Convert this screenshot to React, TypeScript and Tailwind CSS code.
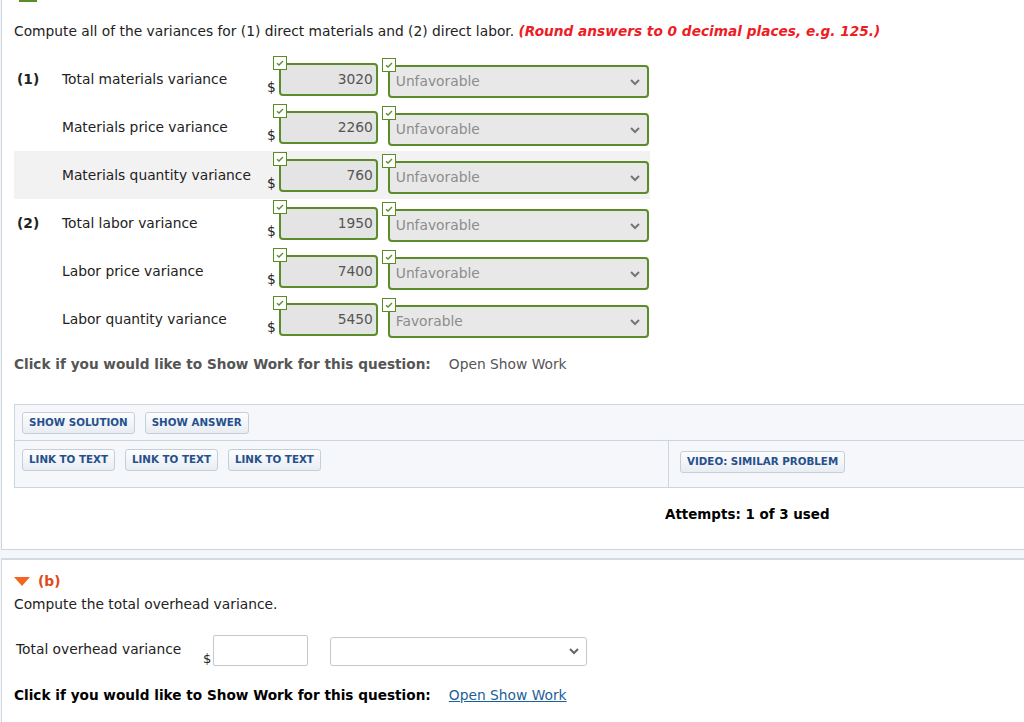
import React from "react";

const font = { fontFamily: '"DejaVu Sans", Verdana, sans-serif' };

function Check() {
  return (
    <div className="absolute -left-[8px] -top-[9px] w-[14px] h-[14px] border border-[#5b8c2a] bg-white flex items-center justify-center z-10">
      <svg width="10" height="8" viewBox="0 0 10 8">
        <path d="M2 4.2 L4 6 L8 2" fill="none" stroke="#5b8c2a" strokeWidth="1.3" />
      </svg>
    </div>
  );
}

function Chevron({ color = "#777" }: { color?: string }) {
  return (
    <svg width="12" height="8" viewBox="0 0 12 8">
      <path d="M2 2 L6 6 L10 2" fill="none" stroke={color} strokeWidth="2" />
    </svg>
  );
}

type Row = { num?: string; label: string; value: string; choice: string; shaded?: boolean };

const rows: Row[] = [
  { num: "(1)", label: "Total materials variance", value: "3020", choice: "Unfavorable" },
  { label: "Materials price variance", value: "2260", choice: "Unfavorable" },
  { label: "Materials quantity variance", value: "760", choice: "Unfavorable", shaded: true },
  { num: "(2)", label: "Total labor variance", value: "1950", choice: "Unfavorable" },
  { label: "Labor price variance", value: "7400", choice: "Unfavorable" },
  { label: "Labor quantity variance", value: "5450", choice: "Favorable" },
];

function Btn({ children }: { children: React.ReactNode }) {
  return (
    <div className="h-[22px] px-[6px] flex items-center rounded-[3px] border border-[#c5cfdc] bg-gradient-to-b from-[#fdfdfe] to-[#e8edf3] text-[10.3px] font-bold text-[#25508c] whitespace-nowrap">
      {children}
    </div>
  );
}

export default function App() {
  return (
    <div className="relative w-[1024px] h-[722px] overflow-hidden bg-[#f4f6f9] text-[13.8px] text-[#222]" style={font}>
      {/* Panel 1 */}
      <div className="relative ml-px h-[550px] bg-white border-l border-b border-[#ccd4df] pl-[12px]">
        <div className="absolute left-[17px] top-0 w-[18px] h-[2px] bg-[#5b8c2a]" />
        <div className="pt-[21px] h-[55px] whitespace-nowrap">
          Compute all of the variances for (1) direct materials and (2) direct labor.{" "}
          <span className="text-[#ee1c25] font-bold italic text-[13.7px]">(Round answers to 0 decimal places, e.g. 125.)</span>
        </div>

        <div className="w-[636px]">
          {rows.map((r, i) => (
            <div key={i} className={`flex h-[48px] ${r.shaded ? "bg-[#f2f2f2]" : ""}`}>
              <div className="w-[48px] pl-[3px] flex items-center font-bold">{r.num}</div>
              <div className="w-[205px] flex items-center whitespace-nowrap">{r.label}</div>
              <div className="flex items-end pt-[8px] h-[41px]">
                <span className="leading-none mb-[1px]">$</span>
                <div className="relative ml-[3px] w-[99px] h-[33px] rounded-[4px] border-2 border-[#5b8c2a] bg-[#e4e4e4] flex items-start justify-end pr-[3px] pt-[4px] text-[#555]">
                  <Check />
                  {r.value}
                </div>
              </div>
              <div className="relative ml-[10px] mt-[10px] w-[261px] h-[33px] rounded-[4px] border-2 border-[#5b8c2a] bg-[#e8e8e8] flex items-center justify-between pl-[6px] pr-[6px] text-[#8c8c8c]">
                <Check />
                <span>{r.choice}</span>
                <Chevron />
              </div>
            </div>
          ))}
        </div>

        <div className="mt-[13px] flex items-center h-[16px] whitespace-nowrap">
          <span className="font-bold text-[#555] text-[13.65px]">Click if you would like to Show Work for this question:</span>
          <span className="ml-[18px] text-[#555]">Open Show Work</span>
        </div>

        <div className="mt-[32px] w-[1040px] border border-[#ccd5e1] bg-[#f5f7fa]">
          <div className="h-[36px] flex items-center gap-[10px] pl-[7px] border-b border-[#ccd5e1]">
            <Btn>SHOW SOLUTION</Btn>
            <Btn>SHOW ANSWER</Btn>
          </div>
          <div className="flex h-[46px]">
            <div className="w-[653px] flex items-start pt-[8px] gap-[10px] pl-[7px]">
              <Btn>LINK TO TEXT</Btn>
              <Btn>LINK TO TEXT</Btn>
              <Btn>LINK TO TEXT</Btn>
            </div>
            <div className="border-l border-[#ccd5e1] pl-[11px] pt-[10px]">
              <Btn>VIDEO: SIMILAR PROBLEM</Btn>
            </div>
          </div>
        </div>

        <div className="mt-[17px] ml-[651px] font-bold text-black whitespace-nowrap text-[13.45px]">Attempts: 1 of 3 used</div>
      </div>

      {/* Panel 2 */}
      <div className="relative mt-[8px] ml-px h-[200px] bg-white border-l border-t-2 border-[#d3dae3] pl-[12px]">
        <div className="pt-[13px] flex items-center gap-[8px] h-[30px]">
          <svg width="16" height="9" viewBox="0 0 16 9">
            <path d="M0 0 H16 L8 9 Z" fill="#f26522" />
          </svg>
          <span className="font-bold text-[#e04a1a]">(b)</span>
        </div>
        <div className="mt-[4px]">Compute the total overhead variance.</div>
        <div className="flex mt-[19px] h-[32px]">
          <div className="w-[189px] pl-[2px] pt-[5px] whitespace-nowrap">Total overhead variance</div>
          <div className="flex items-end">
            <span className="leading-none mb-[1px] text-[13px]">$</span>
            <div className="ml-[2px] w-[95px] h-[31px] border border-[#c8c8c8] rounded-[2px] bg-white" />
          </div>
          <div className="ml-[22px] mt-[3px] w-[257px] h-[29px] border border-[#c8c8c8] rounded-[3px] bg-white flex items-center justify-end pr-[6px]">
            <Chevron color="#666" />
          </div>
        </div>
        <div className="mt-[22px] flex items-center h-[16px] whitespace-nowrap">
          <span className="font-bold text-black text-[13.65px]">Click if you would like to Show Work for this question:</span>
          <span className="ml-[18px] text-[#1d5f9a] underline">Open Show Work</span>
        </div>
        <div className="absolute left-0 right-0 bottom-0 h-[40px] bg-gradient-to-b from-white/0 to-[#ebebeb] pointer-events-none" />
      </div>
    </div>
  );
}
